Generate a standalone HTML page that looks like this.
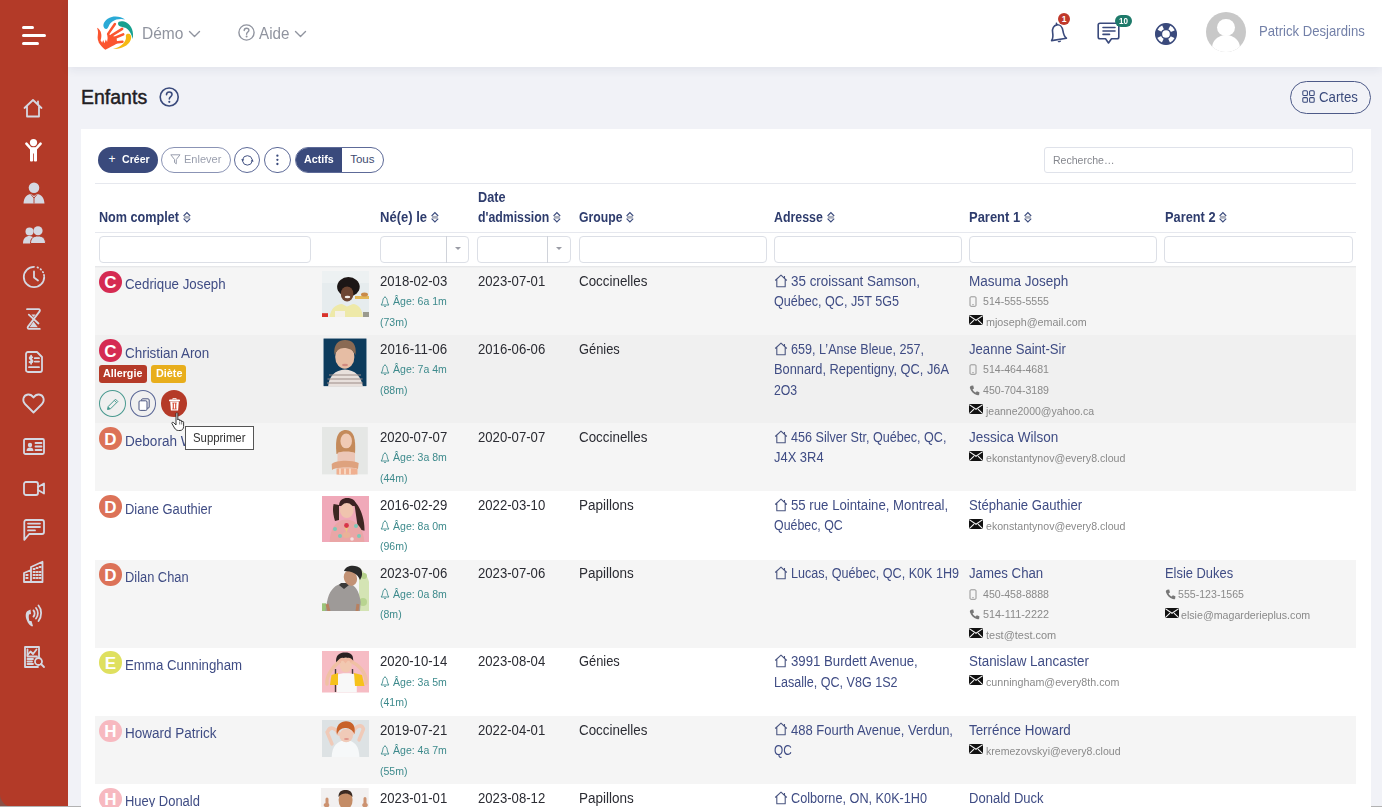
<!DOCTYPE html><html><head><meta charset='utf-8'><style>
*{box-sizing:border-box;margin:0;padding:0}
html,body{width:1382px;height:807px;overflow:hidden;background:#f1f2f7;font-family:"Liberation Sans",sans-serif;position:relative}
.t{position:absolute;white-space:nowrap;transform-origin:0 0}
.a{position:absolute}
svg{position:absolute;overflow:visible}
</style></head><body><div class="a" style="left:0;top:790px;width:20px;height:17px;background:#8a5046"></div>
<div class="a" style="left:0;top:0;width:67.5px;height:807px;background:#b33a28;border-bottom-left-radius:13px"></div>
<div class="a" style="left:21.5px;top:26px;width:12px;height:3px;border-radius:2px;background:#fff"></div>
<div class="a" style="left:21.5px;top:34px;width:24.5px;height:3px;border-radius:2px;background:#fff"></div>
<div class="a" style="left:21.5px;top:41.5px;width:17px;height:3px;border-radius:2px;background:#fff"></div>
<svg style="left:22px;top:98px" width="22" height="20" viewBox="0 0 22 20"><path d="M2.5 10 L11 2 L19.5 10 M5 8 V18.5 H17 V8" fill="none" stroke="#d5d8e2" stroke-width="1.8" stroke-linejoin="round" stroke-linecap="round"/><path d="M16 3.5 V6.5" fill="none" stroke="#d5d8e2" stroke-width="1.8" stroke-linejoin="round" stroke-linecap="round"/></svg>
<svg style="left:25px;top:139px" width="17" height="23" viewBox="0 0 17 23"><circle cx="8.5" cy="3.6" r="3.6" fill="#fff"/><path d="M1.4 4.6 L5.3 9 M15.6 4.6 L11.7 9" stroke="#fff" stroke-width="2.6" stroke-linecap="round"/><path d="M5 8.2 H12 V14.5 H5 Z" fill="#fff"/><path d="M5 13 H8.1 V21.5 C8.1 22.2 7.6 22.5 6.5 22.5 C5.4 22.5 5 22.2 5 21.5 Z M8.9 13 H12 V21.5 C12 22.2 11.6 22.5 10.5 22.5 C9.4 22.5 8.9 22.2 8.9 21.5 Z" fill="#fff"/></svg>
<svg style="left:22.5px;top:181.5px" width="22" height="22" viewBox="0 0 22 22"><circle cx="11" cy="5.8" r="5.3" fill="#d5d8e2"/><path d="M0.5 21.5 C1 15 4 12.5 8 12 L11 14 L14 12 C18 12.5 21 15 21.5 21.5 Z" fill="#d5d8e2"/><path d="M7.8 12.3 L11 16 L14.2 12.3 M11 15 V21.5" fill="none" stroke="#b33a28" stroke-width="0.9"/></svg>
<svg style="left:22.5px;top:225.5px" width="23" height="18" viewBox="0 0 23 18"><circle cx="6.5" cy="5.5" r="4" fill="#d5d8e2"/><circle cx="15" cy="4.8" r="4.6" fill="#d5d8e2"/><path d="M0 17.5 C0 12 3 10 6.5 10 C9 10 10 11 10.5 12 L10.5 17.5 Z" fill="#d5d8e2"/><path d="M7.5 17.5 C7.5 12 10.5 10 15 10 C19.5 10 22.5 12 22.5 17.5 Z" fill="#d5d8e2" stroke="#b33a28" stroke-width="1"/></svg>
<svg style="left:22px;top:265px" width="24" height="24" viewBox="0 0 24 24"><path d="M12 1.8 A10.2 10.2 0 1 0 22.2 12" fill="none" stroke="#d5d8e2" stroke-width="1.8" stroke-linejoin="round" stroke-linecap="round"/><path d="M12 6.5 V12.5 L16 15.5" fill="none" stroke="#d5d8e2" stroke-width="1.8" stroke-linejoin="round" stroke-linecap="round"/><path d="M15.5 2.4 L16 2.6 M18.6 4.2 L19 4.6 M20.8 6.9 L21.1 7.4 M22 10 L22.1 10.5" fill="none" stroke="#d5d8e2" stroke-width="1.8" stroke-linejoin="round" stroke-linecap="round"/></svg>
<svg style="left:26px;top:308px" width="16" height="23" viewBox="0 0 16 23"><path d="M1 1.2 H12.5 C13.8 1.2 14.3 2.3 13.6 3.4 L2 18.6 C1.2 19.8 1.8 20.9 3 20.9 H13.8" fill="none" stroke="#d5d8e2" stroke-width="1.8" stroke-linejoin="round" stroke-linecap="round" stroke-width="1.5"/><path d="M2.8 6.6 L12.5 15.5" fill="none" stroke="#d5d8e2" stroke-width="1.8" stroke-linejoin="round" stroke-linecap="round" stroke-width="1.5"/><path d="M5.4 6.4 H9.6 L7.5 8.9 Z M7.5 13.5 L3.6 19.2 H11.8 Z" fill="#d5d8e2"/></svg>
<svg style="left:24.5px;top:350.5px" width="18" height="22" viewBox="0 0 18 22"><path d="M3 1 H12 L17 6 V19 C17 20.2 16.2 21 15 21 H3 C1.8 21 1 20.2 1 19 V3 C1 1.8 1.8 1 3 1 Z" fill="none" stroke="#d5d8e2" stroke-width="1.8" stroke-linejoin="round" stroke-linecap="round" stroke-width="1.7"/><path d="M7.3 6.4 C6.6 5.6 4.6 5.7 4.6 7.1 C4.6 8.6 7.6 8.6 7.6 10.2 C7.6 11.7 5.3 11.8 4.5 11 M6.1 4.6 V12.8" fill="none" stroke="#d5d8e2" stroke-width="1.8" stroke-linejoin="round" stroke-linecap="round" stroke-width="1.1"/><path d="M9.8 7.2 H14 M9.8 10.6 H14 M4 16.2 H14" fill="none" stroke="#d5d8e2" stroke-width="1.8" stroke-linejoin="round" stroke-linecap="round" stroke-width="1.4"/></svg>
<svg style="left:22px;top:392.5px" width="23" height="21" viewBox="0 0 23 21"><path d="M11.5 19.5 L3 11 C0 8 1 2 6 1.5 C9 1.3 10.5 3 11.5 4.5 C12.5 3 14 1.3 17 1.5 C22 2 23 8 20 11 Z" fill="none" stroke="#d5d8e2" stroke-width="1.8" stroke-linejoin="round" stroke-linecap="round"/></svg>
<svg style="left:22.5px;top:437.5px" width="22" height="17" viewBox="0 0 22 17"><rect x="1" y="1" width="20" height="15" rx="1.5" fill="none" stroke="#d5d8e2" stroke-width="1.8" stroke-linejoin="round" stroke-linecap="round"/><circle cx="7" cy="7" r="2.2" fill="#d5d8e2"/><path d="M3.5 13 C3.5 10.5 5 9.5 7 9.5 C9 9.5 10.5 10.5 10.5 13 Z" fill="#d5d8e2"/><path d="M12.5 5 H18.5 M12.5 8.5 H18.5 M12.5 12 H18.5" fill="none" stroke="#d5d8e2" stroke-width="1.8" stroke-linejoin="round" stroke-linecap="round" stroke-width="1.3"/></svg>
<svg style="left:22.5px;top:480.5px" width="22" height="15" viewBox="0 0 22 15"><rect x="1" y="1" width="14" height="13" rx="2" fill="none" stroke="#d5d8e2" stroke-width="1.8" stroke-linejoin="round" stroke-linecap="round"/><path d="M15 6 L21 2.5 V12.5 L15 9" fill="none" stroke="#d5d8e2" stroke-width="1.8" stroke-linejoin="round" stroke-linecap="round"/></svg>
<svg style="left:22.5px;top:519px" width="23" height="23" viewBox="0 0 23 23"><path d="M3.2 1 H19 C20.2 1 21 1.8 21 3 V13 C21 14.2 20.2 15 19 15 H6.2 L1.3 20.8 V3 C1.3 1.8 2 1 3.2 1 Z" fill="none" stroke="#d5d8e2" stroke-width="1.8" stroke-linejoin="round" stroke-linecap="round" stroke-width="1.7"/><path d="M5 4.6 H17 M5 8 H17 M5 11.4 H12" fill="none" stroke="#d5d8e2" stroke-width="1.8" stroke-linejoin="round" stroke-linecap="round" stroke-width="1.4"/></svg>
<svg style="left:22.5px;top:561px" width="21" height="22" viewBox="0 0 21 22"><path d="M1 21 V12 L8 9 V21 Z M8 21 V6 L19.5 0.8 V21 Z" fill="none" stroke="#d5d8e2" stroke-width="1.8" stroke-linejoin="round" stroke-linecap="round"/><path d="M3.2 14 h1.5 M3.2 17 h1.5 M10.5 8 h1.2 M13.5 7 h1.2 M16.5 6 h1.2 M10.5 11 h1.2 M13.5 11 h1.2 M16.5 11 h1.2 M10.5 14 h1.2 M13.5 14 h1.2 M16.5 14 h1.2 M10.5 17 h1.2 M13.5 17 h1.2 M16.5 17 h1.2" fill="none" stroke="#d5d8e2" stroke-width="1.8" stroke-linejoin="round" stroke-linecap="round" stroke-width="1.4" stroke-linecap="butt"/></svg>
<svg style="left:24px;top:603.5px" width="18" height="23" viewBox="0 0 18 23"><path d="M3.5 7 C2 8 1 11 2.5 15.5 C4 20 6.5 22 8 22.5 L9 22 L7.5 17 L5.5 17 C4.8 15 4.5 12.5 5 10.5 L7 10 L6.5 5.5 Z" fill="#d5d8e2"/><path d="M9.5 6.5 C11 8 11 11 9.5 12.5 M12 4 C14.5 7 14.5 11.5 12 14.5 M14.5 1.5 C18 5.5 18 12.5 14.5 17" fill="none" stroke="#d5d8e2" stroke-width="1.8" stroke-linejoin="round" stroke-linecap="round" stroke-width="1.6"/></svg>
<svg style="left:23.5px;top:645.5px" width="21" height="22" viewBox="0 0 21 22"><path d="M14 21 H1 V1 H15 V11" fill="none" stroke="#d5d8e2" stroke-width="1.8" stroke-linejoin="round" stroke-linecap="round"/><path d="M3.5 9 L6.5 5.5 L9 8 L12.5 3.5" fill="none" stroke="#d5d8e2" stroke-width="1.8" stroke-linejoin="round" stroke-linecap="round" stroke-width="1.4"/><path d="M3.5 3.5 V10.5 H13" fill="none" stroke="#d5d8e2" stroke-width="1.8" stroke-linejoin="round" stroke-linecap="round" stroke-width="1"/><path d="M3.5 13 H9 M3.5 15.5 H8 M3.5 18 H9" fill="none" stroke="#d5d8e2" stroke-width="1.8" stroke-linejoin="round" stroke-linecap="round" stroke-width="1.3"/><circle cx="14.5" cy="15.5" r="3.5" fill="none" stroke="#d5d8e2" stroke-width="1.8" stroke-linejoin="round" stroke-linecap="round" stroke-width="1.5"/><path d="M17 18 L20 21" fill="none" stroke="#d5d8e2" stroke-width="1.8" stroke-linejoin="round" stroke-linecap="round" stroke-width="1.8"/></svg>
<div class="a" style="left:0;top:806px;width:1382px;height:1px;background:#b2b2b2"></div>
<div class="a" style="left:67.5px;top:0;width:1314.5px;height:67px;background:#fff;box-shadow:0 3px 9px rgba(30,40,80,0.07)"></div>
<svg style="left:92px;top:12px" width="48" height="42" viewBox="0 0 922 807"><path d="M225 290 C200 220 260 130 380 95 C470 75 570 95 635 145 C560 125 460 135 385 185 C335 220 325 270 305 305 C285 340 240 335 225 290 Z" fill="#2aaad6"/><path d="M500 225 C495 170 590 165 670 205 C760 260 810 380 780 520 C765 430 710 340 640 305 C570 280 505 280 500 225 Z" fill="#17a08f"/><path d="M670 425 C715 400 765 430 752 505 C740 600 620 715 405 710 C530 680 620 620 650 520 C660 480 635 445 670 425 Z" fill="#f5b913"/><g stroke="#fb5530" stroke-width="48" stroke-linecap="round" fill="none"><path d="M310 420 L440 230"/><path d="M380 450 L580 325"/><path d="M430 500 L600 430"/><path d="M450 585 L585 570"/></g><path d="M95 305 C140 320 185 390 180 460 C178 520 160 560 140 590 C115 560 100 500 112 440 C120 390 115 350 95 305 Z" fill="#fb5530"/><path d="M290 415 L360 440 L470 490 L485 600 C420 640 330 690 255 725 C200 680 150 630 125 575 L165 545 L195 590 L215 540 L240 600 L265 530 L290 575 L300 500 Z" fill="#fb5530"/></svg>
<div class="t" style="left:141.5px;top:26.36px;font-size:16px;line-height:16px;color:#90949f;font-weight:normal;letter-spacing:0px;transform:scaleX(0.97);">Démo</div>
<svg style="left:188px;top:29.5px" width="13" height="8" viewBox="0 0 13 8"><path d="M1.5 1.5 L6.5 6.5 L11.5 1.5" fill="none" stroke="#90949f" stroke-width="1.4" stroke-linecap="round" stroke-linejoin="round"/></svg>
<svg style="left:238px;top:24px" width="18" height="18" viewBox="0 0 18 18"><circle cx="8.5" cy="8.5" r="7.6" fill="none" stroke="#90949f" stroke-width="1.4" stroke-linecap="round" stroke-linejoin="round"/><path d="M6.2 6.6 C6.2 4.9 7.3 4.2 8.5 4.2 C9.8 4.2 10.9 5 10.9 6.3 C10.9 8 8.6 8.1 8.6 10.2" fill="none" stroke="#90949f" stroke-width="1.4" stroke-linecap="round" stroke-linejoin="round"/><circle cx="8.6" cy="12.6" r="1" fill="#90949f"/></svg>
<div class="t" style="left:259px;top:26.36px;font-size:16px;line-height:16px;color:#90949f;font-weight:normal;letter-spacing:0px;transform:scaleX(0.95);">Aide</div>
<svg style="left:294px;top:29.5px" width="13" height="8" viewBox="0 0 13 8"><path d="M1.5 1.5 L6.5 6.5 L11.5 1.5" fill="none" stroke="#90949f" stroke-width="1.4" stroke-linecap="round" stroke-linejoin="round"/></svg>
<svg style="left:1048px;top:21px" width="21" height="23" viewBox="0 0 21 23"><g transform="rotate(-9 10 12)"><path d="M2.5 18.5 C4.5 16.5 4.8 14 4.8 10.5 C4.8 6.5 7 3.8 10 3.8 C13 3.8 15.2 6.5 15.2 10.5 C15.2 14 15.5 16.5 17.5 18.5 Z" fill="none" stroke="#3a4a7c" stroke-width="1.6" stroke-linecap="round" stroke-linejoin="round" stroke-width="1.3"/><path d="M8.3 20 A1.9 1.9 0 0 0 12 20 Z" fill="#3a4a7c"/><path d="M10 2.2 V3.8" fill="none" stroke="#3a4a7c" stroke-width="1.6" stroke-linecap="round" stroke-linejoin="round" stroke-width="1.3"/></g></svg>
<div class="a" style="left:1057.9px;top:12.7px;width:12.4px;height:12.4px;border-radius:50%;background:#c0392b"></div>
<div class="t" style="left:1061.8px;top:15.40px;font-size:8.5px;line-height:8.5px;color:#fff;font-weight:bold;letter-spacing:0px;">1</div>
<svg style="left:1097px;top:22px" width="25" height="23" viewBox="0 0 25 23"><path d="M3 1.2 H20 C21 1.2 21.8 2 21.8 3 V15 C21.8 16 21 16.8 20 16.8 H14.5 L11.5 21 L8.5 16.8 H3 C2 16.8 1.2 16 1.2 15 V3 C1.2 2 2 1.2 3 1.2 Z" fill="none" stroke="#3a4a7c" stroke-width="1.6" stroke-linecap="round" stroke-linejoin="round" stroke-width="1.3"/><path d="M6 5.5 H18 M6 9 H18 M6 12.4 H12.5" fill="none" stroke="#3a4a7c" stroke-width="1.6" stroke-linecap="round" stroke-linejoin="round" stroke-width="1.3"/></svg>
<div class="a" style="left:1115.3px;top:15px;width:17px;height:12px;border-radius:6px;background:#1e7a6a"></div>
<div class="t" style="left:1119px;top:17.10px;font-size:8.5px;line-height:8.5px;color:#fff;font-weight:bold;letter-spacing:0px;transform:scaleX(0.95);">10</div>
<svg style="left:1155px;top:22.7px" width="22" height="22" viewBox="0 0 22 22"><circle cx="11" cy="11" r="10.2" fill="#fff" stroke="#3a4a7c" stroke-width="1.6"/><circle cx="11" cy="11" r="7.5" fill="none" stroke="#3a4a7c" stroke-width="6" stroke-dasharray="6.6 5.18" stroke-dashoffset="3.3" transform="rotate(0 11 11)"/><circle cx="11" cy="11" r="4.6" fill="#fff" stroke="#3a4a7c" stroke-width="1.5"/></svg>
<div class="a" style="left:1206px;top:11.8px;width:40px;height:40px;border-radius:50%;background:#c8c8c8;overflow:hidden"><div class="a" style="left:11px;top:7px;width:18px;height:17.5px;border-radius:50%;background:#fff"></div><div class="a" style="left:6px;top:23px;width:28px;height:26px;border-radius:50%;background:#fff"></div></div>
<div class="t" style="left:1259px;top:22.60px;font-size:15px;line-height:15px;color:#7380a8;font-weight:normal;letter-spacing:0px;transform:scaleX(0.8752843846949327);">Patrick Desjardins</div>
<div class="t" style="left:81px;top:87.99px;font-size:19.5px;line-height:19.5px;color:#1f2023;font-weight:normal;letter-spacing:0px;-webkit-text-stroke:0.45px #1f2023">Enfants</div>
<svg style="left:159px;top:87px" width="21" height="21" viewBox="0 0 21 21"><circle cx="10.2" cy="10" r="9" fill="none" stroke="#3a4a7c" stroke-width="1.6"/><path d="M7.5 7.8 C7.5 5.8 8.8 5 10.2 5 C11.7 5 13 6 13 7.5 C13 9.5 10.3 9.6 10.3 12" fill="none" stroke="#3a4a7c" stroke-width="1.6" stroke-linecap="round" stroke-linejoin="round" stroke-width="1.7"/><circle cx="10.3" cy="14.8" r="1.1" fill="#3a4a7c"/></svg>
<div class="a" style="left:1289.5px;top:80.5px;width:81.5px;height:33px;border-radius:17px;border:1px solid #4d5a88"></div>
<svg style="left:1302.3px;top:89.6px" width="13" height="13" viewBox="0 0 13 13"><rect x="0.8" y="0.8" width="4.6" height="4.6" rx="1" fill="none" stroke="#3a4a7c" stroke-width="1.05"/><rect x="7.6" y="0.8" width="4.6" height="4.6" rx="1" fill="none" stroke="#3a4a7c" stroke-width="1.05"/><rect x="0.8" y="7.6" width="4.6" height="4.6" rx="1" fill="none" stroke="#3a4a7c" stroke-width="1.05"/><rect x="7.6" y="7.6" width="4.6" height="4.6" rx="1" fill="none" stroke="#3a4a7c" stroke-width="1.05"/></svg>
<div class="t" style="left:1319px;top:90.35px;font-size:14px;line-height:14px;color:#3a4a7c;font-weight:normal;letter-spacing:0px;transform:scaleX(0.945);">Cartes</div>
<div class="a" style="left:80.5px;top:129px;width:1290.5px;height:700px;background:#fff"></div>
<div class="a" style="left:98.3px;top:146.5px;width:59.5px;height:26.6px;border-radius:14px;background:#3a4a7c"></div>
<div class="t" style="left:108.5px;top:153.34px;font-size:12px;line-height:12px;color:#fff;font-weight:normal;letter-spacing:0px;">+</div>
<div class="t" style="left:121.5px;top:153.77px;font-size:11.5px;line-height:11.5px;color:#fff;font-weight:bold;letter-spacing:0px;transform:scaleX(0.92);">Créer</div>
<div class="a" style="left:161.2px;top:146.5px;width:69.5px;height:26.6px;border-radius:14px;border:1px solid #8b94b5"></div>
<svg style="left:169.5px;top:153.5px" width="11" height="11" viewBox="0 0 11 11"><path d="M0.8 0.8 H10 L6.3 5.5 V9.8 L4.5 8.5 V5.5 Z" fill="none" stroke="#9a9fae" stroke-width="1"/></svg>
<div class="t" style="left:184.4px;top:153.77px;font-size:11.5px;line-height:11.5px;color:#9a9fae;font-weight:normal;letter-spacing:0px;transform:scaleX(0.96);">Enlever</div>
<div class="a" style="left:233.9px;top:146.5px;width:26.6px;height:26.6px;border-radius:50%;border:1px solid #5d6a98"></div>
<svg style="left:240px;top:152.5px" width="15" height="15" viewBox="0 0 15 15"><path d="M2.6 6.6 A4.9 4.9 0 0 1 12.2 6.6 M12.2 8.2 A4.9 4.9 0 0 1 2.6 8.2" fill="none" stroke="#3a4a7c" stroke-width="0.95"/><path d="M1.2 6.3 L4.2 6.3 L2.7 8.8 Z M10.7 8.5 L13.7 8.5 L12.2 6 Z" fill="#3a4a7c"/></svg>
<div class="a" style="left:264.3px;top:146.5px;width:26.6px;height:26.6px;border-radius:50%;border:1px solid #5d6a98"></div>
<svg style="left:276px;top:154px" width="3" height="12" viewBox="0 0 3 12"><circle cx="1.4" cy="1.7" r="1.15" fill="#3a4a7c"/><circle cx="1.4" cy="5.8" r="1.15" fill="#3a4a7c"/><circle cx="1.4" cy="10" r="1.15" fill="#3a4a7c"/></svg>
<div class="a" style="left:294.6px;top:146.5px;width:89px;height:26.6px;border-radius:14px;border:1px solid #5d6a98;overflow:hidden"><div class="a" style="left:0;top:0;width:46.2px;height:26px;background:#3a4a7c"></div></div>
<div class="t" style="left:303.5px;top:153.57px;font-size:11.5px;line-height:11.5px;color:#fff;font-weight:bold;letter-spacing:0px;transform:scaleX(0.93);">Actifs</div>
<div class="t" style="left:350.2px;top:153.57px;font-size:11.5px;line-height:11.5px;color:#404b70;font-weight:normal;letter-spacing:0px;">Tous</div>
<div class="a" style="left:1043.5px;top:146.5px;width:309.5px;height:26.8px;border-radius:3px;border:1px solid #dfe2ea"></div>
<div class="t" style="left:1053.2px;top:154.69px;font-size:11px;line-height:11px;color:#85878e;font-weight:normal;letter-spacing:0px;transform:scaleX(0.9578972986128012);">Recherche…</div>
<div class="a" style="left:95px;top:183px;width:1261px;height:1px;background:#e6e8ee"></div>
<div class="a" style="left:95px;top:231.5px;width:1261px;height:1.5px;background:#e6e8ee"></div>
<div class="t" style="left:99px;top:210.15px;font-size:14px;line-height:14px;color:#2e3c6d;font-weight:bold;letter-spacing:0px;transform:scaleX(0.902);">Nom complet</div>
<svg style="left:182.79612500000002px;top:211.6px" width="8" height="11" viewBox="0 0 8 11"><path d="M0.6 4 L3.9 0.6 L7.2 4 M0.6 6.6 L3.9 10 L7.2 6.6" fill="none" stroke="#3a4a7c" stroke-width="1.1"/><rect x="1" y="3.9" width="5.8" height="2.8" fill="#a9adbb"/></svg>
<div class="t" style="left:379.9px;top:210.15px;font-size:14px;line-height:14px;color:#2e3c6d;font-weight:bold;letter-spacing:0px;transform:scaleX(0.931);">Né(e) le</div>
<svg style="left:430.788118px;top:211.6px" width="8" height="11" viewBox="0 0 8 11"><path d="M0.6 4 L3.9 0.6 L7.2 4 M0.6 6.6 L3.9 10 L7.2 6.6" fill="none" stroke="#3a4a7c" stroke-width="1.1"/><rect x="1" y="3.9" width="5.8" height="2.8" fill="#a9adbb"/></svg>
<div class="t" style="left:477.6px;top:210.15px;font-size:14px;line-height:14px;color:#2e3c6d;font-weight:bold;letter-spacing:0px;transform:scaleX(0.878);">d'admission</div>
<svg style="left:552.62775px;top:211.6px" width="8" height="11" viewBox="0 0 8 11"><path d="M0.6 4 L3.9 0.6 L7.2 4 M0.6 6.6 L3.9 10 L7.2 6.6" fill="none" stroke="#3a4a7c" stroke-width="1.1"/><rect x="1" y="3.9" width="5.8" height="2.8" fill="#a9adbb"/></svg>
<div class="t" style="left:579px;top:210.15px;font-size:14px;line-height:14px;color:#2e3c6d;font-weight:bold;letter-spacing:0px;transform:scaleX(0.874);">Groupe</div>
<svg style="left:626.3077199999999px;top:211.6px" width="8" height="11" viewBox="0 0 8 11"><path d="M0.6 4 L3.9 0.6 L7.2 4 M0.6 6.6 L3.9 10 L7.2 6.6" fill="none" stroke="#3a4a7c" stroke-width="1.1"/><rect x="1" y="3.9" width="5.8" height="2.8" fill="#a9adbb"/></svg>
<div class="t" style="left:774.2px;top:210.15px;font-size:14px;line-height:14px;color:#2e3c6d;font-weight:bold;letter-spacing:0px;transform:scaleX(0.883);">Adresse</div>
<svg style="left:826.80341px;top:211.6px" width="8" height="11" viewBox="0 0 8 11"><path d="M0.6 4 L3.9 0.6 L7.2 4 M0.6 6.6 L3.9 10 L7.2 6.6" fill="none" stroke="#3a4a7c" stroke-width="1.1"/><rect x="1" y="3.9" width="5.8" height="2.8" fill="#a9adbb"/></svg>
<div class="t" style="left:969.3px;top:210.15px;font-size:14px;line-height:14px;color:#2e3c6d;font-weight:bold;letter-spacing:0px;transform:scaleX(0.925);">Parent 1</div>
<svg style="left:1024.20625px;top:211.6px" width="8" height="11" viewBox="0 0 8 11"><path d="M0.6 4 L3.9 0.6 L7.2 4 M0.6 6.6 L3.9 10 L7.2 6.6" fill="none" stroke="#3a4a7c" stroke-width="1.1"/><rect x="1" y="3.9" width="5.8" height="2.8" fill="#a9adbb"/></svg>
<div class="t" style="left:1164.8px;top:210.15px;font-size:14px;line-height:14px;color:#2e3c6d;font-weight:bold;letter-spacing:0px;transform:scaleX(0.914);">Parent 2</div>
<svg style="left:1219.0984999999998px;top:211.6px" width="8" height="11" viewBox="0 0 8 11"><path d="M0.6 4 L3.9 0.6 L7.2 4 M0.6 6.6 L3.9 10 L7.2 6.6" fill="none" stroke="#3a4a7c" stroke-width="1.1"/><rect x="1" y="3.9" width="5.8" height="2.8" fill="#a9adbb"/></svg>
<div class="t" style="left:477.6px;top:189.95px;font-size:14px;line-height:14px;color:#2e3c6d;font-weight:bold;letter-spacing:0px;transform:scaleX(0.906);">Date</div>
<div class="a" style="left:99.3px;top:236.4px;width:211.5px;height:26.2px;border-radius:4px;border:1px solid #dcdfe6;background:#fff"></div>
<div class="a" style="left:379.9px;top:236.4px;width:89.6px;height:26.2px;border-radius:4px;border:1px solid #dcdfe6;background:#fff"></div><div class="a" style="left:445.8px;top:236.4px;width:1px;height:26.2px;background:#d0d3da"></div><svg style="left:454.7px;top:247px" width="7" height="4" viewBox="0 0 7 4"><path d="M0 0 H6 L3 3 Z" fill="#9a9ca5"/></svg>
<div class="a" style="left:477.3px;top:236.4px;width:93.4px;height:26.2px;border-radius:4px;border:1px solid #dcdfe6;background:#fff"></div><div class="a" style="left:547.0px;top:236.4px;width:1px;height:26.2px;background:#d0d3da"></div><svg style="left:555.9000000000001px;top:247px" width="7" height="4" viewBox="0 0 7 4"><path d="M0 0 H6 L3 3 Z" fill="#9a9ca5"/></svg>
<div class="a" style="left:578.5px;top:236.4px;width:188px;height:26.2px;border-radius:4px;border:1px solid #dcdfe6;background:#fff"></div>
<div class="a" style="left:774px;top:236.4px;width:187.5px;height:26.2px;border-radius:4px;border:1px solid #dcdfe6;background:#fff"></div>
<div class="a" style="left:969.3px;top:236.4px;width:188px;height:26.2px;border-radius:4px;border:1px solid #dcdfe6;background:#fff"></div>
<div class="a" style="left:1164.4px;top:236.4px;width:188.3px;height:26.2px;border-radius:4px;border:1px solid #dcdfe6;background:#fff"></div>
<svg width="0" height="0" style="position:absolute"><defs><filter id="pblur" x="-5%" y="-5%" width="110%" height="110%"><feGaussianBlur stdDeviation="0.6"/></filter></defs></svg>
<div class="a" style="left:95.3px;top:267px;width:1260.7px;height:68.2px;background:#f5f5f5"></div>
<div class="a" style="left:95.3px;top:335.2px;width:1260.7px;height:88px;background:#f0f0f0"></div>
<div class="a" style="left:95.3px;top:423.2px;width:1260.7px;height:68.2px;background:#f5f5f5"></div>
<div class="a" style="left:95.3px;top:491.4px;width:1260.7px;height:68.2px;background:#ffffff"></div>
<div class="a" style="left:95.3px;top:559.6px;width:1260.7px;height:88px;background:#f5f5f5"></div>
<div class="a" style="left:95.3px;top:647.6px;width:1260.7px;height:68.2px;background:#ffffff"></div>
<div class="a" style="left:95.3px;top:715.8px;width:1260.7px;height:68.2px;background:#f5f5f5"></div>
<div class="a" style="left:95.3px;top:784px;width:1260.7px;height:40px;background:#ffffff"></div>
<div class="a" style="left:95.3px;top:266px;width:1260.7px;height:2px;background:linear-gradient(#e2e3e6,#f4f4f4)"></div>
<div class="a" style="left:99.2px;top:270.8px;width:22.6px;height:22.6px;border-radius:50%;background:#d52b52"></div>
<div class="t" style="left:99.2px;width:22.6px;text-align:center;top:274.3px;font-size:17px;line-height:17px;color:#fff;font-weight:bold">C</div>
<div class="t" style="left:125.4px;top:277.45px;font-size:14px;line-height:14px;color:#3f4c84;font-weight:normal;letter-spacing:0px;transform:scaleX(0.9503173431734316);">Cedrique Joseph</div>
<svg style="left:321.6px;top:270.9px;overflow:hidden" width="47.3" height="45.7" viewBox="0 0 47.3 45.7" preserveAspectRatio="none"><g filter="url(#pblur)"><rect width="48" height="46" fill="#e6ecee"/><rect x="0" y="0" width="48" height="12" fill="#edf1f2"/><rect x="33" y="25" width="15" height="3" fill="#e3b85a"/><ellipse cx="42.5" cy="23.5" rx="3.5" ry="2" fill="#c88a4a"/><rect x="41" y="41" width="7" height="5" fill="#9a9a8e"/><ellipse cx="26.4" cy="15.8" rx="11.3" ry="9.7" fill="#1c1614"/><ellipse cx="25.1" cy="22.9" rx="6.3" ry="7.5" fill="#6d4432"/><ellipse cx="25.5" cy="26" rx="2.8" ry="1.3" fill="#f4eee8"/><path d="M7.5 46 C9 37 14 33.5 20 33 L25 35.5 L31 33 C36 33.5 40 37 41 46 Z" fill="#eee9a8"/><rect x="0" y="42.2" width="6" height="3.8" fill="#d8302a"/><rect x="13" y="40" width="10" height="6" fill="#f4f0e8"/></g></svg>
<div class="t" style="left:379.9px;top:273.75px;font-size:14px;line-height:14px;color:#2b2c33;font-weight:normal;letter-spacing:0px;transform:scaleX(0.9382198952879581);">2018-02-03</div>
<svg style="left:380px;top:295.8px" width="10" height="12" viewBox="0 0 10 12"><path d="M1 9 C2.2 7.8 2.5 6.5 2.8 4.5 C3.1 2.6 3.9 1.3 5 1.3 C6.1 1.3 6.9 2.6 7.2 4.5 C7.5 6.5 7.8 7.8 9 9 Z" fill="none" stroke="#3d8a8c" stroke-width="0.9" stroke-linejoin="round"/><path d="M4 10 A1 1 0 0 0 6 10 Z" fill="#3d8a8c"/><path d="M5 0.3 V1.3" stroke="#3d8a8c" stroke-width="0.8"/></svg>
<div class="t" style="left:393.1px;top:296.20px;font-size:10.75px;line-height:10.75px;color:#3d8a8c;font-weight:normal;letter-spacing:0px;transform:scaleX(0.98);">Âge: 6a 1m</div>
<div class="t" style="left:379.8px;top:316.80px;font-size:10.75px;line-height:10.75px;color:#3d8a8c;font-weight:normal;letter-spacing:0px;transform:scaleX(0.98);">(73m)</div>
<div class="t" style="left:477.6px;top:273.75px;font-size:14px;line-height:14px;color:#2b2c33;font-weight:normal;letter-spacing:0px;transform:scaleX(0.9382198952879581);">2023-07-01</div>
<div class="t" style="left:578.5px;top:273.75px;font-size:14px;line-height:14px;color:#2b2c33;font-weight:normal;letter-spacing:0px;transform:scaleX(0.9553906591008294);">Coccinelles</div>
<svg style="left:774px;top:273.5px" width="14" height="14" viewBox="0 0 14 14"><path d="M1.2 6.5 L7 1.2 L12.8 6.5 M2.8 5.2 V12.8 H11.2 V5.2 M10.5 2 V4.3" fill="none" stroke="#4a5580" stroke-width="1.1" stroke-linejoin="round"/></svg>
<div class="t" style="left:790.8px;top:273.75px;font-size:14px;line-height:14px;color:#3f4c84;font-weight:normal;letter-spacing:0px;transform:scaleX(0.958217270194986);">35 croissant Samson,</div>
<div class="t" style="left:774px;top:294.05px;font-size:14px;line-height:14px;color:#3f4c84;font-weight:normal;letter-spacing:0px;transform:scaleX(0.8990784445942909);">Québec, QC, J5T 5G5</div>
<div class="t" style="left:969.4px;top:273.75px;font-size:14px;line-height:14px;color:#3f4c84;font-weight:normal;letter-spacing:0px;transform:scaleX(0.9676909035594767);">Masuma Joseph</div>
<svg style="left:969.4px;top:296.1px" width="8" height="11" viewBox="0 0 8 11"><rect x="1" y="0.8" width="6" height="9.5" rx="1" fill="none" stroke="#8a8a8a" stroke-width="0.9"/><path d="M3.3 8.6 H4.7" stroke="#8a8a8a" stroke-width="0.8"/></svg>
<div class="t" style="left:982.6999999999999px;top:296.29px;font-size:11px;line-height:11px;color:#8a8a8a;font-weight:normal;letter-spacing:0px;transform:scaleX(0.9632839224629418);">514-555-5555</div>
<svg style="left:969.4px;top:315.00000000000006px" width="15" height="10" viewBox="0 0 15 10"><rect x="0" y="0" width="14" height="10" fill="#111"/><path d="M0.3 0.6 L7 5.3 L13.7 0.6 M0.3 9.6 L5 5.2 M13.7 9.6 L9 5.2" stroke="#f4f4f4" stroke-width="1.1" fill="none"/></svg>
<div class="t" style="left:986.0px;top:317.09px;font-size:11px;line-height:11px;color:#8a8a8a;font-weight:normal;letter-spacing:0px;transform:scaleX(0.9778857837181044);">mjoseph@email.com</div>
<div class="a" style="left:99.2px;top:339.0px;width:22.6px;height:22.6px;border-radius:50%;background:#d52b52"></div>
<div class="t" style="left:99.2px;width:22.6px;text-align:center;top:342.5px;font-size:17px;line-height:17px;color:#fff;font-weight:bold">C</div>
<div class="t" style="left:125.4px;top:345.65px;font-size:14px;line-height:14px;color:#3f4c84;font-weight:normal;letter-spacing:0px;transform:scaleX(0.95863539445629);">Christian Aron</div>
<svg style="left:323.3px;top:338.4px;overflow:hidden" width="44" height="48.7" viewBox="0 0 44 48.7" preserveAspectRatio="none"><g filter="url(#pblur)"><rect width="44" height="48.7" fill="#fff"/><rect x="0.5" y="0.5" width="43" height="47.7" fill="#0c3a5c"/><path d="M5 48.7 C6 38 12 32 22 31.5 C32 32 38 38 40 48.7 Z" fill="#e8e0dc"/><path d="M6 37 H38 M4.5 41 H39.5 M4 45 H40" stroke="#9c8c88" stroke-width="1.2"/><ellipse cx="21.8" cy="19" rx="9.6" ry="11.8" fill="#e6bda4"/><path d="M11.5 17 C10 6 16 2 22 2 C29 2 34 6 32.5 17 C30 12 26 10 21 10 C16 10 13.5 13 11.5 17 Z" fill="#8a6a52"/><ellipse cx="22" cy="27" rx="3" ry="1.2" fill="#d08a80"/></g></svg>
<div class="t" style="left:379.9px;top:341.95px;font-size:14px;line-height:14px;color:#2b2c33;font-weight:normal;letter-spacing:0px;transform:scaleX(0.952136373699358);">2016-11-06</div>
<svg style="left:380px;top:364.0px" width="10" height="12" viewBox="0 0 10 12"><path d="M1 9 C2.2 7.8 2.5 6.5 2.8 4.5 C3.1 2.6 3.9 1.3 5 1.3 C6.1 1.3 6.9 2.6 7.2 4.5 C7.5 6.5 7.8 7.8 9 9 Z" fill="none" stroke="#3d8a8c" stroke-width="0.9" stroke-linejoin="round"/><path d="M4 10 A1 1 0 0 0 6 10 Z" fill="#3d8a8c"/><path d="M5 0.3 V1.3" stroke="#3d8a8c" stroke-width="0.8"/></svg>
<div class="t" style="left:393.1px;top:364.40px;font-size:10.75px;line-height:10.75px;color:#3d8a8c;font-weight:normal;letter-spacing:0px;transform:scaleX(0.98);">Âge: 7a 4m</div>
<div class="t" style="left:379.8px;top:385.00px;font-size:10.75px;line-height:10.75px;color:#3d8a8c;font-weight:normal;letter-spacing:0px;transform:scaleX(0.98);">(88m)</div>
<div class="t" style="left:477.6px;top:341.95px;font-size:14px;line-height:14px;color:#2b2c33;font-weight:normal;letter-spacing:0px;transform:scaleX(0.9382198952879581);">2016-06-06</div>
<div class="t" style="left:578.5px;top:341.95px;font-size:14px;line-height:14px;color:#2b2c33;font-weight:normal;letter-spacing:0px;transform:scaleX(0.9175061641423037);">Génies</div>
<svg style="left:774px;top:341.7px" width="14" height="14" viewBox="0 0 14 14"><path d="M1.2 6.5 L7 1.2 L12.8 6.5 M2.8 5.2 V12.8 H11.2 V5.2 M10.5 2 V4.3" fill="none" stroke="#4a5580" stroke-width="1.1" stroke-linejoin="round"/></svg>
<div class="t" style="left:790.8px;top:341.95px;font-size:14px;line-height:14px;color:#3f4c84;font-weight:normal;letter-spacing:0px;transform:scaleX(0.899894358757659);">659, L’Anse Bleue, 257,</div>
<div class="t" style="left:774px;top:362.25px;font-size:14px;line-height:14px;color:#3f4c84;font-weight:normal;letter-spacing:0px;transform:scaleX(0.9153318077803204);">Bonnard, Repentigny, QC, J6A</div>
<div class="t" style="left:774px;top:382.55px;font-size:14px;line-height:14px;color:#3f4c84;font-weight:normal;letter-spacing:0px;transform:scaleX(0.8765053128689492);">2O3</div>
<div class="t" style="left:969.4px;top:341.95px;font-size:14px;line-height:14px;color:#3f4c84;font-weight:normal;letter-spacing:0px;transform:scaleX(0.9360905660377359);">Jeanne Saint-Sir</div>
<svg style="left:969.4px;top:364.3px" width="8" height="11" viewBox="0 0 8 11"><rect x="1" y="0.8" width="6" height="9.5" rx="1" fill="none" stroke="#8a8a8a" stroke-width="0.9"/><path d="M3.3 8.6 H4.7" stroke="#8a8a8a" stroke-width="0.8"/></svg>
<div class="t" style="left:982.6999999999999px;top:364.49px;font-size:11px;line-height:11px;color:#8a8a8a;font-weight:normal;letter-spacing:0px;transform:scaleX(0.9632839224629418);">514-464-4681</div>
<svg style="left:969.4px;top:384.6px" width="11" height="11" viewBox="0 0 11 11"><path d="M2.2 0.8 L4.2 0.6 L5 3.4 L3.6 4.3 C4.2 6 5.2 7 6.8 7.6 L7.8 6.2 L10.4 7.2 L10.2 9.4 C9.8 10.2 8.8 10.4 7.8 10.1 C4.5 9 2 6.5 1 3.2 C0.7 2.2 1 1.2 2.2 0.8 Z" fill="#777"/></svg>
<div class="t" style="left:982.6999999999999px;top:384.79px;font-size:11px;line-height:11px;color:#8a8a8a;font-weight:normal;letter-spacing:0px;transform:scaleX(0.9632839224629418);">450-704-3189</div>
<svg style="left:969.4px;top:403.50000000000006px" width="15" height="10" viewBox="0 0 15 10"><rect x="0" y="0" width="14" height="10" fill="#111"/><path d="M0.3 0.6 L7 5.3 L13.7 0.6 M0.3 9.6 L5 5.2 M13.7 9.6 L9 5.2" stroke="#f4f4f4" stroke-width="1.1" fill="none"/></svg>
<div class="t" style="left:986.0px;top:405.59px;font-size:11px;line-height:11px;color:#8a8a8a;font-weight:normal;letter-spacing:0px;transform:scaleX(0.9538673652281814);">jeanne2000@yahoo.ca</div>
<div class="a" style="left:99.2px;top:427.0px;width:22.6px;height:22.6px;border-radius:50%;background:#dc7258"></div>
<div class="t" style="left:99.2px;width:22.6px;text-align:center;top:430.5px;font-size:17px;line-height:17px;color:#fff;font-weight:bold">D</div>
<div class="t" style="left:125.4px;top:433.65px;font-size:14px;line-height:14px;color:#3f4c84;font-weight:normal;letter-spacing:0px;transform:scaleX(0.9673433362753752);">Deborah W</div>
<svg style="left:322.2px;top:427.2px;overflow:hidden" width="45.8" height="47.4" viewBox="0 0 45.8 47.4" preserveAspectRatio="none"><g filter="url(#pblur)"><rect width="45.8" height="47.4" fill="#e5e7e5"/><path d="M14.5 27 C13 12 15 3 24 3 C32 3 34 12 33 27 Z" fill="#c48a5a"/><ellipse cx="24.2" cy="13.9" rx="5.8" ry="7.4" fill="#f0cab4"/><path d="M15.5 47.4 L15.5 26 C18 24 30 24 33 26 L33 47.4 Z" fill="#ecc6b6"/><path d="M9.7 37 C14 33 30 33 36.7 36 L36 42 C30 39.5 15 39.5 10 43 Z" fill="#dea27e"/><rect x="14.5" y="41.5" width="21" height="6" fill="#f0b090"/><path d="M18 41.5 V47.4 M23 41.5 V47.4 M28 41.5 V47.4" stroke="#fbe0cc" stroke-width="1.6"/></g></svg>
<div class="t" style="left:379.9px;top:429.95px;font-size:14px;line-height:14px;color:#2b2c33;font-weight:normal;letter-spacing:0px;transform:scaleX(0.9382198952879581);">2020-07-07</div>
<svg style="left:380px;top:452.0px" width="10" height="12" viewBox="0 0 10 12"><path d="M1 9 C2.2 7.8 2.5 6.5 2.8 4.5 C3.1 2.6 3.9 1.3 5 1.3 C6.1 1.3 6.9 2.6 7.2 4.5 C7.5 6.5 7.8 7.8 9 9 Z" fill="none" stroke="#3d8a8c" stroke-width="0.9" stroke-linejoin="round"/><path d="M4 10 A1 1 0 0 0 6 10 Z" fill="#3d8a8c"/><path d="M5 0.3 V1.3" stroke="#3d8a8c" stroke-width="0.8"/></svg>
<div class="t" style="left:393.1px;top:452.40px;font-size:10.75px;line-height:10.75px;color:#3d8a8c;font-weight:normal;letter-spacing:0px;transform:scaleX(0.98);">Âge: 3a 8m</div>
<div class="t" style="left:379.8px;top:473.00px;font-size:10.75px;line-height:10.75px;color:#3d8a8c;font-weight:normal;letter-spacing:0px;transform:scaleX(0.98);">(44m)</div>
<div class="t" style="left:477.6px;top:429.95px;font-size:14px;line-height:14px;color:#2b2c33;font-weight:normal;letter-spacing:0px;transform:scaleX(0.9382198952879581);">2020-07-07</div>
<div class="t" style="left:578.5px;top:429.95px;font-size:14px;line-height:14px;color:#2b2c33;font-weight:normal;letter-spacing:0px;transform:scaleX(0.9553906591008294);">Coccinelles</div>
<svg style="left:774px;top:429.7px" width="14" height="14" viewBox="0 0 14 14"><path d="M1.2 6.5 L7 1.2 L12.8 6.5 M2.8 5.2 V12.8 H11.2 V5.2 M10.5 2 V4.3" fill="none" stroke="#4a5580" stroke-width="1.1" stroke-linejoin="round"/></svg>
<div class="t" style="left:790.8px;top:429.95px;font-size:14px;line-height:14px;color:#3f4c84;font-weight:normal;letter-spacing:0px;transform:scaleX(0.8995658465991317);">456 Silver Str, Québec, QC,</div>
<div class="t" style="left:774px;top:450.25px;font-size:14px;line-height:14px;color:#3f4c84;font-weight:normal;letter-spacing:0px;transform:scaleX(0.9235961594413733);">J4X 3R4</div>
<div class="t" style="left:969.4px;top:429.95px;font-size:14px;line-height:14px;color:#3f4c84;font-weight:normal;letter-spacing:0px;transform:scaleX(0.9655079311508606);">Jessica Wilson</div>
<svg style="left:969.4px;top:450.90000000000003px" width="15" height="10" viewBox="0 0 15 10"><rect x="0" y="0" width="14" height="10" fill="#111"/><path d="M0.3 0.6 L7 5.3 L13.7 0.6 M0.3 9.6 L5 5.2 M13.7 9.6 L9 5.2" stroke="#f4f4f4" stroke-width="1.1" fill="none"/></svg>
<div class="t" style="left:986.0px;top:452.99px;font-size:11px;line-height:11px;color:#8a8a8a;font-weight:normal;letter-spacing:0px;transform:scaleX(0.9648102087163405);">ekonstantynov@every8.cloud</div>
<div class="a" style="left:99.2px;top:495.2px;width:22.6px;height:22.6px;border-radius:50%;background:#dc7258"></div>
<div class="t" style="left:99.2px;width:22.6px;text-align:center;top:498.7px;font-size:17px;line-height:17px;color:#fff;font-weight:bold">D</div>
<div class="t" style="left:125.4px;top:501.85px;font-size:14px;line-height:14px;color:#3f4c84;font-weight:normal;letter-spacing:0px;transform:scaleX(0.9249045959847353);">Diane Gauthier</div>
<svg style="left:321.6px;top:495.9px;overflow:hidden" width="47.3" height="46" viewBox="0 0 47.3 46" preserveAspectRatio="none"><g filter="url(#pblur)"><rect width="47.3" height="46" fill="#f0a9b9"/><path d="M11.6 8 C10 14 12 22 13 25 L17 24 L17 9 Z" fill="#3e2622"/><path d="M31.6 5 C37 8 43 22 42.5 34.8 L36 33 L33 12 Z" fill="#3e2622"/><path d="M17 10 C17 4 21 2 25 2 C30 2 34 4 34 10 Z" fill="#3a2420"/><ellipse cx="24.8" cy="14.5" rx="6.8" ry="7.4" fill="#f0c4ae"/><path d="M7.7 46 C8 34 13 24 24 23.5 C35 24 41 32 42.5 46 Z" fill="#eaa6a6"/><circle cx="13" cy="33" r="2" fill="#7cc8b8"/><circle cx="34" cy="30" r="2" fill="#7cc8b8"/><circle cx="18" cy="40" r="2" fill="#7cc8b8"/><circle cx="37" cy="40" r="2" fill="#7cc8b8"/><circle cx="30" cy="43" r="1.8" fill="#f4e0e0"/><path d="M22 30 L27 30 L24.5 36.5 Z" fill="#ecc680"/><circle cx="24.5" cy="29.5" r="2.4" fill="#d8364a"/><ellipse cx="24.5" cy="39" rx="4" ry="3" fill="#eab298"/></g></svg>
<div class="t" style="left:379.9px;top:498.15px;font-size:14px;line-height:14px;color:#2b2c33;font-weight:normal;letter-spacing:0px;transform:scaleX(0.9382198952879581);">2016-02-29</div>
<svg style="left:380px;top:520.1999999999999px" width="10" height="12" viewBox="0 0 10 12"><path d="M1 9 C2.2 7.8 2.5 6.5 2.8 4.5 C3.1 2.6 3.9 1.3 5 1.3 C6.1 1.3 6.9 2.6 7.2 4.5 C7.5 6.5 7.8 7.8 9 9 Z" fill="none" stroke="#3d8a8c" stroke-width="0.9" stroke-linejoin="round"/><path d="M4 10 A1 1 0 0 0 6 10 Z" fill="#3d8a8c"/><path d="M5 0.3 V1.3" stroke="#3d8a8c" stroke-width="0.8"/></svg>
<div class="t" style="left:393.1px;top:520.60px;font-size:10.75px;line-height:10.75px;color:#3d8a8c;font-weight:normal;letter-spacing:0px;transform:scaleX(0.98);">Âge: 8a 0m</div>
<div class="t" style="left:379.8px;top:541.20px;font-size:10.75px;line-height:10.75px;color:#3d8a8c;font-weight:normal;letter-spacing:0px;transform:scaleX(0.98);">(96m)</div>
<div class="t" style="left:477.6px;top:498.15px;font-size:14px;line-height:14px;color:#2b2c33;font-weight:normal;letter-spacing:0px;transform:scaleX(0.9382198952879581);">2022-03-10</div>
<div class="t" style="left:578.5px;top:498.15px;font-size:14px;line-height:14px;color:#2b2c33;font-weight:normal;letter-spacing:0px;transform:scaleX(0.9625515534781414);">Papillons</div>
<svg style="left:774px;top:497.9px" width="14" height="14" viewBox="0 0 14 14"><path d="M1.2 6.5 L7 1.2 L12.8 6.5 M2.8 5.2 V12.8 H11.2 V5.2 M10.5 2 V4.3" fill="none" stroke="#4a5580" stroke-width="1.1" stroke-linejoin="round"/></svg>
<div class="t" style="left:790.8px;top:498.15px;font-size:14px;line-height:14px;color:#3f4c84;font-weight:normal;letter-spacing:0px;transform:scaleX(0.9437898686679174);">55 rue Lointaine, Montreal,</div>
<div class="t" style="left:774px;top:518.45px;font-size:14px;line-height:14px;color:#3f4c84;font-weight:normal;letter-spacing:0px;transform:scaleX(0.8839991969484039);">Québec, QC</div>
<div class="t" style="left:969.4px;top:498.15px;font-size:14px;line-height:14px;color:#3f4c84;font-weight:normal;letter-spacing:0px;transform:scaleX(0.9374951431161767);">Stéphanie Gauthier</div>
<svg style="left:969.4px;top:519.1px" width="15" height="10" viewBox="0 0 15 10"><rect x="0" y="0" width="14" height="10" fill="#111"/><path d="M0.3 0.6 L7 5.3 L13.7 0.6 M0.3 9.6 L5 5.2 M13.7 9.6 L9 5.2" stroke="#f4f4f4" stroke-width="1.1" fill="none"/></svg>
<div class="t" style="left:986.0px;top:521.19px;font-size:11px;line-height:11px;color:#8a8a8a;font-weight:normal;letter-spacing:0px;transform:scaleX(0.9648102087163405);">ekonstantynov@every8.cloud</div>
<div class="a" style="left:99.2px;top:563.4px;width:22.6px;height:22.6px;border-radius:50%;background:#dc7258"></div>
<div class="t" style="left:99.2px;width:22.6px;text-align:center;top:566.9px;font-size:17px;line-height:17px;color:#fff;font-weight:bold">D</div>
<div class="t" style="left:125.4px;top:570.05px;font-size:14px;line-height:14px;color:#3f4c84;font-weight:normal;letter-spacing:0px;transform:scaleX(0.9182043762688924);">Dilan Chan</div>
<svg style="left:321.6px;top:563.6px;overflow:hidden" width="47.3" height="47.3" viewBox="0 0 47.3 47.3" preserveAspectRatio="none"><g filter="url(#pblur)"><rect width="47.3" height="47.3" fill="#f5f5f5"/><path d="M37 3 C42 8 47 14 47.3 20 V47.3 H37 Z" fill="#d4e4b4"/><circle cx="42" cy="12" r="3" fill="#b4d08a"/><circle cx="41" cy="38" r="4" fill="#b8d490"/><rect x="0" y="39.3" width="4" height="8" fill="#9cc47a"/><path d="M3.2 47.3 L5 38 C7 27 12 22 18 20 L26 19 C33 21 37 26 38.7 38 L38 47.3 Z" fill="#9e9a98"/><path d="M17 21 L22 25 L27 21 L25 19 L19 19 Z" fill="#3a3a3a"/><ellipse cx="28.4" cy="13.9" rx="6.5" ry="8" fill="#c29274" transform="rotate(-20 28.4 13.9)"/><path d="M22 7 C24 1 34 0 39 5 C41 9 40 13 38 16 C36 10 30 7 22 7 Z" fill="#2a2a2a"/><path d="M5 40 L7 47.3 M36 40 L35 47.3" stroke="#b88060" stroke-width="3"/></g></svg>
<div class="t" style="left:379.9px;top:566.35px;font-size:14px;line-height:14px;color:#2b2c33;font-weight:normal;letter-spacing:0px;transform:scaleX(0.9382198952879581);">2023-07-06</div>
<svg style="left:380px;top:588.4px" width="10" height="12" viewBox="0 0 10 12"><path d="M1 9 C2.2 7.8 2.5 6.5 2.8 4.5 C3.1 2.6 3.9 1.3 5 1.3 C6.1 1.3 6.9 2.6 7.2 4.5 C7.5 6.5 7.8 7.8 9 9 Z" fill="none" stroke="#3d8a8c" stroke-width="0.9" stroke-linejoin="round"/><path d="M4 10 A1 1 0 0 0 6 10 Z" fill="#3d8a8c"/><path d="M5 0.3 V1.3" stroke="#3d8a8c" stroke-width="0.8"/></svg>
<div class="t" style="left:393.1px;top:588.80px;font-size:10.75px;line-height:10.75px;color:#3d8a8c;font-weight:normal;letter-spacing:0px;transform:scaleX(0.98);">Âge: 0a 8m</div>
<div class="t" style="left:379.8px;top:609.40px;font-size:10.75px;line-height:10.75px;color:#3d8a8c;font-weight:normal;letter-spacing:0px;transform:scaleX(0.98);">(8m)</div>
<div class="t" style="left:477.6px;top:566.35px;font-size:14px;line-height:14px;color:#2b2c33;font-weight:normal;letter-spacing:0px;transform:scaleX(0.9382198952879581);">2023-07-06</div>
<div class="t" style="left:578.5px;top:566.35px;font-size:14px;line-height:14px;color:#2b2c33;font-weight:normal;letter-spacing:0px;transform:scaleX(0.9625515534781414);">Papillons</div>
<svg style="left:774px;top:566.1px" width="14" height="14" viewBox="0 0 14 14"><path d="M1.2 6.5 L7 1.2 L12.8 6.5 M2.8 5.2 V12.8 H11.2 V5.2 M10.5 2 V4.3" fill="none" stroke="#4a5580" stroke-width="1.1" stroke-linejoin="round"/></svg>
<div class="t" style="left:790.8px;top:566.35px;font-size:14px;line-height:14px;color:#3f4c84;font-weight:normal;letter-spacing:0px;transform:scaleX(0.9000585627039237);">Lucas, Québec, QC, K0K 1H9</div>
<div class="t" style="left:969.4px;top:566.35px;font-size:14px;line-height:14px;color:#3f4c84;font-weight:normal;letter-spacing:0px;transform:scaleX(0.9440954274353877);">James Chan</div>
<svg style="left:969.4px;top:588.7px" width="8" height="11" viewBox="0 0 8 11"><rect x="1" y="0.8" width="6" height="9.5" rx="1" fill="none" stroke="#8a8a8a" stroke-width="0.9"/><path d="M3.3 8.6 H4.7" stroke="#8a8a8a" stroke-width="0.8"/></svg>
<div class="t" style="left:982.6999999999999px;top:588.89px;font-size:11px;line-height:11px;color:#8a8a8a;font-weight:normal;letter-spacing:0px;transform:scaleX(0.9632839224629418);">450-458-8888</div>
<svg style="left:969.4px;top:609.0px" width="11" height="11" viewBox="0 0 11 11"><path d="M2.2 0.8 L4.2 0.6 L5 3.4 L3.6 4.3 C4.2 6 5.2 7 6.8 7.6 L7.8 6.2 L10.4 7.2 L10.2 9.4 C9.8 10.2 8.8 10.4 7.8 10.1 C4.5 9 2 6.5 1 3.2 C0.7 2.2 1 1.2 2.2 0.8 Z" fill="#777"/></svg>
<div class="t" style="left:982.6999999999999px;top:609.19px;font-size:11px;line-height:11px;color:#8a8a8a;font-weight:normal;letter-spacing:0px;transform:scaleX(0.9869158878504672);">514-111-2222</div>
<svg style="left:969.4px;top:627.9000000000001px" width="15" height="10" viewBox="0 0 15 10"><rect x="0" y="0" width="14" height="10" fill="#111"/><path d="M0.3 0.6 L7 5.3 L13.7 0.6 M0.3 9.6 L5 5.2 M13.7 9.6 L9 5.2" stroke="#f4f4f4" stroke-width="1.1" fill="none"/></svg>
<div class="t" style="left:986.0px;top:629.99px;font-size:11px;line-height:11px;color:#8a8a8a;font-weight:normal;letter-spacing:0px;transform:scaleX(0.9961862527716187);">test@test.com</div>
<div class="t" style="left:1164.6px;top:566.35px;font-size:14px;line-height:14px;color:#3f4c84;font-weight:normal;letter-spacing:0px;transform:scaleX(0.9212428662016486);">Elsie Dukes</div>
<svg style="left:1164.6px;top:588.7px" width="11" height="11" viewBox="0 0 11 11"><path d="M2.2 0.8 L4.2 0.6 L5 3.4 L3.6 4.3 C4.2 6 5.2 7 6.8 7.6 L7.8 6.2 L10.4 7.2 L10.2 9.4 C9.8 10.2 8.8 10.4 7.8 10.1 C4.5 9 2 6.5 1 3.2 C0.7 2.2 1 1.2 2.2 0.8 Z" fill="#777"/></svg>
<div class="t" style="left:1177.8999999999999px;top:588.89px;font-size:11px;line-height:11px;color:#8a8a8a;font-weight:normal;letter-spacing:0px;transform:scaleX(0.9632839224629418);">555-123-1565</div>
<svg style="left:1164.6px;top:607.6px" width="15" height="10" viewBox="0 0 15 10"><rect x="0" y="0" width="14" height="10" fill="#111"/><path d="M0.3 0.6 L7 5.3 L13.7 0.6 M0.3 9.6 L5 5.2 M13.7 9.6 L9 5.2" stroke="#f4f4f4" stroke-width="1.1" fill="none"/></svg>
<div class="t" style="left:1181.1999999999998px;top:609.69px;font-size:11px;line-height:11px;color:#8a8a8a;font-weight:normal;letter-spacing:0px;transform:scaleX(0.9681301955274557);">elsie@magarderieplus.com</div>
<div class="a" style="left:99.2px;top:651.4px;width:22.6px;height:22.6px;border-radius:50%;background:#dfe05f"></div>
<div class="t" style="left:99.2px;width:22.6px;text-align:center;top:654.9px;font-size:17px;line-height:17px;color:#fff;font-weight:bold">E</div>
<div class="t" style="left:125.4px;top:658.05px;font-size:14px;line-height:14px;color:#3f4c84;font-weight:normal;letter-spacing:0px;transform:scaleX(0.9463821189544134);">Emma Cunningham</div>
<svg style="left:321.6px;top:651.2px;overflow:hidden" width="47.3" height="41.5" viewBox="0 0 47.3 41.5" preserveAspectRatio="none"><g filter="url(#pblur)"><rect width="47.3" height="41.5" fill="#f6bcc4"/><path d="M14.2 12 C13 4 18 1.6 23 1.6 C29 1.6 32 4 31 12 Z" fill="#2c2424"/><path d="M13.5 18 V41 M30.5 18 V25" stroke="#4a3a3a" stroke-width="1.4"/><ellipse cx="23.8" cy="13.9" rx="6" ry="7.5" fill="#f2c8b0"/><path d="M14.8 41.5 V24 C18 21.5 30 21.5 34.8 24 V41.5 Z" fill="#f8f8f8"/><path d="M8 34 L9.5 24 L16 22 L16 34 Z" fill="#f6c21c"/><path d="M32 22 L40 24 L42.5 35 L33 35 Z" fill="#f6c21c"/><path d="M5 33 C4 26 10 16 17 11 M44 32 C45 25 40 16 30 11" stroke="#f0c0a4" stroke-width="3.5" fill="none" stroke-linecap="round"/><path d="M17 11 C19 7 22 8 23.5 10 C25 8 28 7 30 11" stroke="#f0b8a0" stroke-width="3" fill="none"/></g></svg>
<div class="t" style="left:379.9px;top:654.35px;font-size:14px;line-height:14px;color:#2b2c33;font-weight:normal;letter-spacing:0px;transform:scaleX(0.9382198952879581);">2020-10-14</div>
<svg style="left:380px;top:676.4px" width="10" height="12" viewBox="0 0 10 12"><path d="M1 9 C2.2 7.8 2.5 6.5 2.8 4.5 C3.1 2.6 3.9 1.3 5 1.3 C6.1 1.3 6.9 2.6 7.2 4.5 C7.5 6.5 7.8 7.8 9 9 Z" fill="none" stroke="#3d8a8c" stroke-width="0.9" stroke-linejoin="round"/><path d="M4 10 A1 1 0 0 0 6 10 Z" fill="#3d8a8c"/><path d="M5 0.3 V1.3" stroke="#3d8a8c" stroke-width="0.8"/></svg>
<div class="t" style="left:393.1px;top:676.80px;font-size:10.75px;line-height:10.75px;color:#3d8a8c;font-weight:normal;letter-spacing:0px;transform:scaleX(0.98);">Âge: 3a 5m</div>
<div class="t" style="left:379.8px;top:697.40px;font-size:10.75px;line-height:10.75px;color:#3d8a8c;font-weight:normal;letter-spacing:0px;transform:scaleX(0.98);">(41m)</div>
<div class="t" style="left:477.6px;top:654.35px;font-size:14px;line-height:14px;color:#2b2c33;font-weight:normal;letter-spacing:0px;transform:scaleX(0.9382198952879581);">2023-08-04</div>
<div class="t" style="left:578.5px;top:654.35px;font-size:14px;line-height:14px;color:#2b2c33;font-weight:normal;letter-spacing:0px;transform:scaleX(0.9175061641423037);">Génies</div>
<svg style="left:774px;top:654.1px" width="14" height="14" viewBox="0 0 14 14"><path d="M1.2 6.5 L7 1.2 L12.8 6.5 M2.8 5.2 V12.8 H11.2 V5.2 M10.5 2 V4.3" fill="none" stroke="#4a5580" stroke-width="1.1" stroke-linejoin="round"/></svg>
<div class="t" style="left:790.8px;top:654.35px;font-size:14px;line-height:14px;color:#3f4c84;font-weight:normal;letter-spacing:0px;transform:scaleX(0.9432988492386377);">3991 Burdett Avenue,</div>
<div class="t" style="left:774px;top:674.65px;font-size:14px;line-height:14px;color:#3f4c84;font-weight:normal;letter-spacing:0px;transform:scaleX(0.896551724137931);">Lasalle, QC, V8G 1S2</div>
<div class="t" style="left:969.4px;top:654.35px;font-size:14px;line-height:14px;color:#3f4c84;font-weight:normal;letter-spacing:0px;transform:scaleX(0.9577254021698466);">Stanislaw Lancaster</div>
<svg style="left:969.4px;top:675.3000000000001px" width="15" height="10" viewBox="0 0 15 10"><rect x="0" y="0" width="14" height="10" fill="#111"/><path d="M0.3 0.6 L7 5.3 L13.7 0.6 M0.3 9.6 L5 5.2 M13.7 9.6 L9 5.2" stroke="#f4f4f4" stroke-width="1.1" fill="none"/></svg>
<div class="t" style="left:986.0px;top:677.39px;font-size:11px;line-height:11px;color:#8a8a8a;font-weight:normal;letter-spacing:0px;transform:scaleX(0.9728350045578852);">cunningham@every8th.com</div>
<div class="a" style="left:99.2px;top:719.5999999999999px;width:22.6px;height:22.6px;border-radius:50%;background:#f7b9c0"></div>
<div class="t" style="left:99.2px;width:22.6px;text-align:center;top:723.0999999999999px;font-size:17px;line-height:17px;color:#fff;font-weight:bold">H</div>
<div class="t" style="left:125.4px;top:726.25px;font-size:14px;line-height:14px;color:#3f4c84;font-weight:normal;letter-spacing:0px;transform:scaleX(0.9650041152263373);">Howard Patrick</div>
<svg style="left:321.6px;top:719.8px;overflow:hidden" width="47.3" height="37" viewBox="0 0 47.3 37" preserveAspectRatio="none"><g filter="url(#pblur)"><rect width="47.3" height="37" fill="#dde2e4"/><path d="M6 11 C8 6 14 8 16.8 14 M41 8 C39 4 33 6 30.9 13" stroke="#f0cab8" stroke-width="3.6" fill="none" stroke-linecap="round"/><path d="M5 12 L10 24 M41.5 9 L37 20" stroke="#f0cab8" stroke-width="3.4" stroke-linecap="round"/><path d="M9.7 37 C10 26 15 21 24 20 C33 21 37 26 37.4 37 Z" fill="#f6f8f9"/><ellipse cx="24.2" cy="15.5" rx="6.8" ry="6.8" fill="#f0cab8"/><path d="M15 15 C13 5 19 1.3 24 1.3 C30 1.3 34 5 32.5 14 C30 9 26 8 23 8 C19 8 16 11 15 15 Z" fill="#c8622c"/><ellipse cx="24.5" cy="19" rx="2.5" ry="1" fill="#e0948a"/></g></svg>
<div class="t" style="left:379.9px;top:722.55px;font-size:14px;line-height:14px;color:#2b2c33;font-weight:normal;letter-spacing:0px;transform:scaleX(0.9382198952879581);">2019-07-21</div>
<svg style="left:380px;top:744.5999999999999px" width="10" height="12" viewBox="0 0 10 12"><path d="M1 9 C2.2 7.8 2.5 6.5 2.8 4.5 C3.1 2.6 3.9 1.3 5 1.3 C6.1 1.3 6.9 2.6 7.2 4.5 C7.5 6.5 7.8 7.8 9 9 Z" fill="none" stroke="#3d8a8c" stroke-width="0.9" stroke-linejoin="round"/><path d="M4 10 A1 1 0 0 0 6 10 Z" fill="#3d8a8c"/><path d="M5 0.3 V1.3" stroke="#3d8a8c" stroke-width="0.8"/></svg>
<div class="t" style="left:393.1px;top:745.00px;font-size:10.75px;line-height:10.75px;color:#3d8a8c;font-weight:normal;letter-spacing:0px;transform:scaleX(0.98);">Âge: 4a 7m</div>
<div class="t" style="left:379.8px;top:765.60px;font-size:10.75px;line-height:10.75px;color:#3d8a8c;font-weight:normal;letter-spacing:0px;transform:scaleX(0.98);">(55m)</div>
<div class="t" style="left:477.6px;top:722.55px;font-size:14px;line-height:14px;color:#2b2c33;font-weight:normal;letter-spacing:0px;transform:scaleX(0.9382198952879581);">2022-04-01</div>
<div class="t" style="left:578.5px;top:722.55px;font-size:14px;line-height:14px;color:#2b2c33;font-weight:normal;letter-spacing:0px;transform:scaleX(0.9553906591008294);">Coccinelles</div>
<svg style="left:774px;top:722.3px" width="14" height="14" viewBox="0 0 14 14"><path d="M1.2 6.5 L7 1.2 L12.8 6.5 M2.8 5.2 V12.8 H11.2 V5.2 M10.5 2 V4.3" fill="none" stroke="#4a5580" stroke-width="1.1" stroke-linejoin="round"/></svg>
<div class="t" style="left:790.8px;top:722.55px;font-size:14px;line-height:14px;color:#3f4c84;font-weight:normal;letter-spacing:0px;transform:scaleX(0.9304496096203895);">488 Fourth Avenue, Verdun,</div>
<div class="t" style="left:774px;top:742.85px;font-size:14px;line-height:14px;color:#3f4c84;font-weight:normal;letter-spacing:0px;transform:scaleX(0.8476190476190476);">QC</div>
<div class="t" style="left:969.4px;top:722.55px;font-size:14px;line-height:14px;color:#3f4c84;font-weight:normal;letter-spacing:0px;transform:scaleX(0.9548878792320094);">Terrénce Howard</div>
<svg style="left:969.4px;top:743.5px" width="15" height="10" viewBox="0 0 15 10"><rect x="0" y="0" width="14" height="10" fill="#111"/><path d="M0.3 0.6 L7 5.3 L13.7 0.6 M0.3 9.6 L5 5.2 M13.7 9.6 L9 5.2" stroke="#f4f4f4" stroke-width="1.1" fill="none"/></svg>
<div class="t" style="left:986.0px;top:745.59px;font-size:11px;line-height:11px;color:#8a8a8a;font-weight:normal;letter-spacing:0px;transform:scaleX(0.9602496934566938);">kremezovskyi@every8.cloud</div>
<div class="a" style="left:99.2px;top:787.8px;width:22.6px;height:22.6px;border-radius:50%;background:#f7b9c0"></div>
<div class="t" style="left:99.2px;width:22.6px;text-align:center;top:791.3px;font-size:17px;line-height:17px;color:#fff;font-weight:bold">H</div>
<div class="t" style="left:125.4px;top:794.45px;font-size:14px;line-height:14px;color:#3f4c84;font-weight:normal;letter-spacing:0px;transform:scaleX(0.9254054054054055);">Huey Donald</div>
<svg style="left:321.3px;top:787.6px;overflow:hidden" width="47.7" height="30" viewBox="0 0 47.7 30" preserveAspectRatio="none"><g filter="url(#pblur)"><rect width="47.7" height="30" fill="#f2f0f0"/><ellipse cx="24.6" cy="12" rx="7" ry="9.5" fill="#c48c66"/><path d="M17.5 9 C17.5 3 21 1.9 24.6 1.9 C28 1.9 31.5 3 31.5 9 C29 6 26 5.5 24.6 5.5 C22 5.5 19.5 6 17.5 9 Z" fill="#3a2a22"/><path d="M6 18.4 L6 11 M44 18.4 L44 10.5" stroke="#cc9270" stroke-width="3" stroke-linecap="round"/><ellipse cx="5.5" cy="17" rx="2.8" ry="2" fill="#cc9270"/><ellipse cx="44" cy="17" rx="2.8" ry="2" fill="#cc9270"/></g></svg>
<div class="t" style="left:379.9px;top:790.75px;font-size:14px;line-height:14px;color:#2b2c33;font-weight:normal;letter-spacing:0px;transform:scaleX(0.9382198952879581);">2023-01-01</div>
<div class="t" style="left:477.6px;top:790.75px;font-size:14px;line-height:14px;color:#2b2c33;font-weight:normal;letter-spacing:0px;transform:scaleX(0.9382198952879581);">2023-08-12</div>
<div class="t" style="left:578.5px;top:790.75px;font-size:14px;line-height:14px;color:#2b2c33;font-weight:normal;letter-spacing:0px;transform:scaleX(0.9625515534781414);">Papillons</div>
<svg style="left:774px;top:790.5px" width="14" height="14" viewBox="0 0 14 14"><path d="M1.2 6.5 L7 1.2 L12.8 6.5 M2.8 5.2 V12.8 H11.2 V5.2 M10.5 2 V4.3" fill="none" stroke="#4a5580" stroke-width="1.1" stroke-linejoin="round"/></svg>
<div class="t" style="left:790.8px;top:790.75px;font-size:14px;line-height:14px;color:#3f4c84;font-weight:normal;letter-spacing:0px;transform:scaleX(0.906200582605077);">Colborne, ON, K0K-1H0</div>
<div class="t" style="left:969.4px;top:790.75px;font-size:14px;line-height:14px;color:#3f4c84;font-weight:normal;letter-spacing:0px;transform:scaleX(0.9306822612085769);">Donald Duck</div>
<div class="a" style="left:99.2px;top:365.3px;width:47.9px;height:17.3px;border-radius:3px;background:#b53a28"></div>
<div class="t" style="left:103.4px;top:368.29px;font-size:11px;line-height:11px;color:#fff;font-weight:bold;letter-spacing:0px;transform:scaleX(0.9762291908633371);">Allergie</div>
<div class="a" style="left:151.3px;top:365.3px;width:34.9px;height:17.3px;border-radius:3px;background:#e8ae1c"></div>
<div class="t" style="left:155.5px;top:368.29px;font-size:11px;line-height:11px;color:#fff;font-weight:bold;letter-spacing:0px;transform:scaleX(0.981184668989547);">Diète</div>
<div class="a" style="left:98.9px;top:390.3px;width:27.1px;height:27.2px;border-radius:50%;border:1px solid #4a9a90"></div>
<svg style="left:105px;top:396.5px" width="15" height="15" viewBox="0 0 15 15"><path d="M2.5 12.5 L3.2 9.5 L10.5 2.2 L12.8 4.5 L5.5 11.8 Z M9.3 3.4 L11.6 5.7" fill="none" stroke="#4a9a90" stroke-width="1"/><path d="M2.5 12.5 L3.2 9.5 L5.5 11.8 Z" fill="#4a9a90"/></svg>
<div class="a" style="left:129.7px;top:390.3px;width:26.8px;height:27.2px;border-radius:50%;border:1px solid #5a6796"></div>
<svg style="left:137.5px;top:398px" width="12" height="13" viewBox="0 0 12 13"><path d="M3.5 2.5 V2 C3.5 1.3 4 0.8 4.7 0.8 H10 C10.7 0.8 11.2 1.3 11.2 2 V9 C11.2 9.7 10.7 10.2 10 10.2 H9.2" fill="none" stroke="#4a5580" stroke-width="1"/><rect x="1" y="2.8" width="8" height="9.6" rx="1.2" fill="#fff" stroke="#4a5580" stroke-width="1"/></svg>
<div class="a" style="left:160.5px;top:390.3px;width:26.9px;height:27.2px;border-radius:50%;background:#b53a28"></div>
<svg style="left:167.5px;top:397.8px" width="13" height="13" viewBox="0 0 13 13"><path d="M1 2.6 C1 1.8 1.5 1.5 2.5 1.5 H10.5 C11.5 1.5 12 1.8 12 2.6 V3.3 H1 Z" fill="#fff"/><path d="M4.8 1.6 V0.6 H8.2 V1.6" fill="none" stroke="#fff" stroke-width="0.9"/><path d="M2.2 3.5 H10.8 L10.1 12.4 H2.9 Z" fill="#fff"/><path d="M5.3 5 V11 M7.7 5 V11" stroke="#d9503a" stroke-width="1.2"/><path d="M4.3 5 H8.7 M4.3 11 H8.7" stroke="#d9503a" stroke-width="0.8"/></svg>
<div class="a" style="left:185px;top:425.7px;width:69px;height:24.5px;background:#fff;border:1px solid #555"></div>
<div class="t" style="left:192.9px;top:431.84px;font-size:12px;line-height:12px;color:#333;font-weight:normal;letter-spacing:0px;transform:scaleX(0.948);">Supprimer</div>
<svg style="left:170.5px;top:412px" width="16" height="20" viewBox="0 0 16 20"><path d="M5 1.5 C5 0.6 6.8 0.6 6.8 1.5 V8 C7 7 8.6 7 8.7 8 V9 C9 8 10.6 8 10.7 9 V10 C11 9.2 12.6 9.2 12.6 10.2 V14.5 C12.6 17 11 18.5 9 18.5 H7.5 C5.5 18.5 4.5 17.5 3.5 16 L0.9 11.5 C0.5 10.6 1.8 9.8 2.6 10.6 L5 13 Z" fill="#fff" stroke="#222" stroke-width="0.9" stroke-linejoin="round"/><path d="M8.7 9.5 V12.5 M10.7 10 V12.5" stroke="#222" stroke-width="0.6"/></svg></body></html>
